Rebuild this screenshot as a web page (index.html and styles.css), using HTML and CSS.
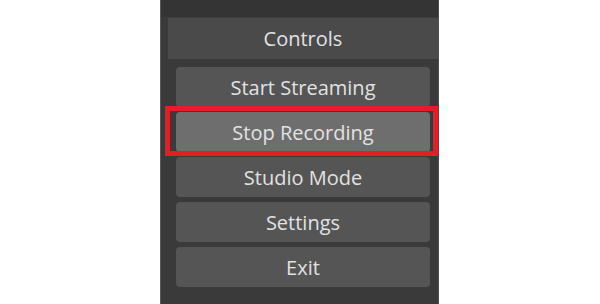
FILE: index.html
```html
<!DOCTYPE html>
<html>
<head>
<meta charset="utf-8">
<link rel="stylesheet" href="styles.css">
</head>
<body>
<div class="panel">
  <div class="topbar"></div>
  <div class="header">Controls</div>
  <div class="buttons">
    <div class="btn">Start Streaming</div>
    <div class="btn btn-active">Stop Recording<span class="highlight"></span></div>
    <div class="btn">Studio Mode</div>
    <div class="btn">Settings</div>
    <div class="btn">Exit</div>
  </div>
</div>
</body>
</html>
```

FILE: styles.css
```css
html, body {
  margin: 0;
  padding: 0;
  background: #ffffff;
}
body {
  font-family: "Open Sans", "Noto Sans", "Liberation Sans", sans-serif;
}
.panel {
  margin-left: 160px;
  width: 279px;
  height: 304px;
  box-sizing: border-box;
  background: #3a3a3a;
  border-left: 1px solid #5a5a5a;
  border-right: 1px solid #4e4e4e;
}
.topbar {
  height: 17px;
  background: #343434;
}
.header {
  margin: 1px 0 0 7px;
  height: 41px;
  background: #4a4a4a;
  color: #e2e2e2;
  font-size: 20px;
  display: flex;
  align-items: center;
  justify-content: center;
}
.buttons {
  display: flex;
  flex-direction: column;
  gap: 5px;
  padding: 8px 8px 0 15px;
}
.btn {
  position: relative;
  height: 40px;
  border-radius: 4px;
  background: #555555;
  color: #e2e2e2;
  font-size: 20px;
  display: flex;
  align-items: center;
  justify-content: center;
}
.btn-active {
  background: #6e6e6e;
}
.highlight {
  position: absolute;
  top: -6px;
  left: -11px;
  right: -8px;
  bottom: -4px;
  border: 5px solid #e41e26;
}
```
